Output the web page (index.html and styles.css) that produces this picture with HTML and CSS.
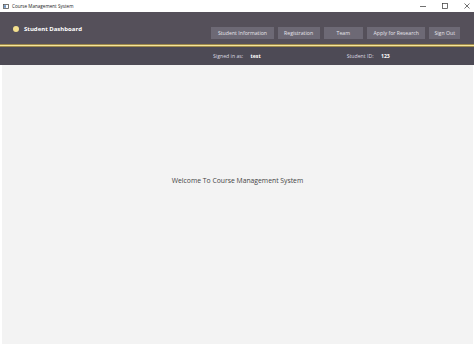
FILE: index.html
```html
<!DOCTYPE html>
<html lang="en">
<head>
    <meta charset="UTF-8">
    <meta name="viewport" content="width=device-width, initial-scale=1.0">
    <title>Course Management System</title>
    <link rel="stylesheet" href="styles.css">
</head>
<body>
    <div class="window">
        <div class="titlebar">
            <div class="app-title">
                <svg class="app-icon" width="6" height="5" viewBox="0 0 6 5">
                    <rect x="0.5" y="0.5" width="5" height="4" fill="#fff" stroke="#555" stroke-width="0.8"/>
                    <rect x="1.2" y="1.2" width="1.6" height="2.6" fill="#4a7bb5"/>
                </svg>
                <span>Course Management System</span>
            </div>
            <div class="win-controls">
                <svg width="8" height="8" viewBox="0 0 8 8"><line x1="1" y1="4.5" x2="7" y2="4.5" stroke="#333" stroke-width="0.7"/></svg>
                <svg width="8" height="8" viewBox="0 0 8 8"><rect x="1.5" y="1.5" width="5" height="5" fill="none" stroke="#333" stroke-width="0.7"/></svg>
                <svg width="8" height="8" viewBox="0 0 8 8"><path d="M1.5 1.5 L6.5 6.5 M6.5 1.5 L1.5 6.5" stroke="#333" stroke-width="0.7"/></svg>
            </div>
        </div>

        <header class="header">
            <div class="brand">
                <span class="dot"></span>
                <h1>Student Dashboard</h1>
            </div>
            <nav class="nav">
                <button class="nav-btn">Student Information</button>
                <button class="nav-btn">Registration</button>
                <button class="nav-btn btn-team">Team</button>
                <button class="nav-btn">Apply for Research</button>
                <button class="nav-btn btn-signout">Sign Out</button>
            </nav>
        </header>
        <div class="gold-rule"></div>
        <div class="infobar">
            <div class="info-item">Signed in as: <b>test</b></div>
            <div class="info-item">Student ID: <b>123</b></div>
        </div>

        <main class="content">
            <p class="welcome">Welcome To Course Management System</p>
        </main>
    </div>
</body>
</html>
```

FILE: styles.css
```css
/* General */
body {
    margin: 0;
    padding: 0;
    font-family: 'Open Sans', 'Noto Sans', sans-serif;
    background-color: #ffffff;
}

.window {
    width: 474px;
    height: 347px;
    display: flex;
    flex-direction: column;
    background-color: #ffffff;
}

/* Title bar */
.titlebar {
    height: 12px;
    display: flex;
    align-items: center;
    justify-content: space-between;
    padding: 0 3px 0 3px;
}

.app-title {
    display: flex;
    align-items: center;
    gap: 3px;
    font-size: 4.6px;
    color: #222;
}

.win-controls {
    display: flex;
    gap: 14px;
}

/* Header */
.header {
    height: 32px;
    background-color: #55505a;
    display: flex;
    justify-content: space-between;
    padding: 0 14px 0 13px;
}

.brand {
    display: flex;
    align-items: center;
    gap: 5px;
    height: 34px;
}

.dot {
    width: 6px;
    height: 6px;
    border-radius: 50%;
    background-color: #f4e08e;
}

.brand h1 {
    margin: 0;
    font-size: 6px;
    font-weight: bold;
    color: #ffffff;
}

.nav {
    display: flex;
    gap: 4px;
    margin-top: 15px;
    height: 12px;
}

.nav-btn {
    height: 12px;
    padding: 0 6.5px;
    border: none;
    background-color: #6d6975;
    color: #e6e4ea;
    font-family: inherit;
    font-size: 5.2px;
    cursor: pointer;
}

.btn-team {
    padding: 0 13px;
}

.btn-signout {
    padding: 0 5px;
}

.gold-rule {
    height: 1px;
    border-top: 1px solid #9e8a4c;
    border-bottom: 1px solid #9e8a4c;
    background-color: #f6e59a;
}

/* Info strip */
.infobar {
    height: 18px;
    background-color: #4d4a55;
    display: flex;
    align-items: center;
    padding-left: 213px;
    gap: 86px;
    color: #dcdae0;
    font-size: 5.2px;
}

.info-item b {
    color: #ffffff;
    margin-left: 6px;
}

/* Main content */
.content {
    flex: 1;
    margin: 0 1px 3px 2px;
    background-color: #f3f3f3;
    display: flex;
    justify-content: center;
}

.welcome {
    margin: 111px 0 0;
    font-size: 6.8px;
    color: #444444;
}
```
